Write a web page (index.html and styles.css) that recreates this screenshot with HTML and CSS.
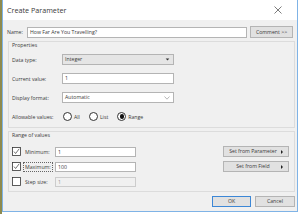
FILE: index.html
```html
<!DOCTYPE html>
<html>
<head>
<meta charset="utf-8">
<link rel="stylesheet" href="styles.css">
</head>
<body>
<div class="desk">
  <div class="strip"></div>
  <div class="window">
    <div class="titlebar">
      <span class="title">Create Parameter</span>
      <svg class="close" width="8" height="8" viewBox="0 0 8 8"><path d="M0.5 0.5L7.5 7.5M7.5 0.5L0.5 7.5" stroke="#444" stroke-width="0.7" fill="none"/></svg>
    </div>
    <div class="main">
      <div class="namerow">
        <span class="namelabel">Name:</span>
        <div class="field namefield">How Far Are You Travelling?</div>
        <div class="btn comment">Comment &gt;&gt;</div>
      </div>

      <div class="group props">
        <div class="gtitle">Properties</div>
        <div class="prow">
          <span class="plabel">Data type:</span>
          <div class="field select grey">Integer
            <svg class="arrow" width="5" height="3" viewBox="0 0 5 3"><path d="M0.7 0.4L4.3 0.4L2.5 2.6Z" fill="#333"/></svg>
          </div>
        </div>
        <div class="prow">
          <span class="plabel">Current value:</span>
          <div class="field ctrl">1</div>
        </div>
        <div class="prow">
          <span class="plabel">Display format:</span>
          <div class="field select">Automatic
            <svg class="chev" width="6" height="4" viewBox="0 0 6 4"><path d="M0.5 0.5L3 3.2L5.5 0.5" stroke="#999" stroke-width="0.7" fill="none"/></svg>
          </div>
        </div>
        <div class="prow">
          <span class="plabel">Allowable values:</span>
          <div class="radios">
            <span class="radio"></span><span class="rtext">All</span>
            <span class="radio"></span><span class="rtext">List</span>
            <span class="radio on"></span><span class="rtext">Range</span>
          </div>
        </div>
      </div>

      <div class="group range">
        <div class="gtitle">Range of values</div>
        <div class="rrow">
          <div class="chk">
            <svg class="box" width="9" height="9" viewBox="0 0 9 9"><rect x="0.5" y="0.5" width="8" height="8" fill="#fff" stroke="#333" stroke-width="0.8"/><path d="M2 4.6L3.6 6.5L7.2 1.8" stroke="#333" stroke-width="0.7" fill="none"/></svg>
            <span class="clabel">Minimum:</span>
          </div>
          <div class="field rinput">1</div>
          <div class="btn setbtn">Set from Parameter<span class="tri"></span></div>
        </div>
        <div class="rrow">
          <div class="chk">
            <svg class="box" width="9" height="9" viewBox="0 0 9 9"><rect x="0.5" y="0.5" width="8" height="8" fill="#fff" stroke="#333" stroke-width="0.8"/><path d="M2 4.6L3.6 6.5L7.2 1.8" stroke="#333" stroke-width="0.7" fill="none"/></svg>
            <span class="clabel focus">Maximum:</span>
          </div>
          <div class="field rinput">100</div>
          <div class="btn setbtn">Set from Field<span class="tri"></span></div>
        </div>
        <div class="rrow">
          <div class="chk">
            <svg class="box" width="9" height="9" viewBox="0 0 9 9"><rect x="0.5" y="0.5" width="8" height="8" fill="#fff" stroke="#333" stroke-width="0.8"/></svg>
            <span class="clabel">Step size:</span>
          </div>
          <div class="field rinput disabled">1</div>
        </div>
      </div>

      <div class="footer">
        <div class="btn okbtn">OK</div>
        <div class="btn cancelbtn">Cancel</div>
      </div>
    </div>
  </div>
</div>
</body>
</html>
```
FILE: styles.css
```css
html, body {
  margin: 0;
  padding: 0;
  background: #ffffff;
}
body {
  font-family: "Open Sans", "Noto Sans", sans-serif;
  font-size: 5.2px;
  color: #3a3a3a;
}
.desk {
  display: flex;
  width: 300px;
  height: 214px;
}
.strip {
  width: 2px;
  height: 214px;
  background: #8d8a4e;
}
.window {
  box-sizing: border-box;
  width: 296px;
  height: 212px;
  border: 1px solid #7fb3e6;
  border-top: 0;
  background: #f0f0f0;
  display: flex;
  flex-direction: column;
}
.titlebar {
  height: 20px;
  background: #ffffff;
  display: flex;
  align-items: center;
  justify-content: space-between;
  padding: 0 15px 0 4px;
}
.title {
  font-size: 7.2px;
  color: #3a3a3a;
}
.main {
  padding: 6px 2px 0 4px;
  display: flex;
  flex-direction: column;
}
.namerow {
  display: flex;
  align-items: center;
  height: 12px;
}
.namelabel {
  width: 20px;
}
.field {
  box-sizing: border-box;
  background: #ffffff;
  border: 1px solid #b4b4b4;
  height: 11px;
  line-height: 9px;
  padding-left: 2px;
  white-space: nowrap;
}
.namefield {
  width: 220px;
}
.btn {
  box-sizing: border-box;
  background: #e1e1e1;
  border: 1px solid #b4b4b4;
  text-align: center;
  white-space: nowrap;
}
.comment {
  width: 43px;
  height: 12px;
  line-height: 10px;
  margin-left: 3px;
}
.group {
  border: 1px solid #dcdcdc;
  margin-left: 1px;
  display: flex;
  flex-direction: column;
}
.props {
  margin-top: 3px;
  padding-bottom: 5px;
  gap: 8px;
}
.gtitle {
  height: 7px;
  line-height: 7px;
  padding-left: 3px;
  margin-bottom: -3px;
}
.prow {
  display: flex;
  align-items: center;
  height: 11px;
  padding-left: 3px;
}
.plabel {
  width: 50px;
}
.ctrl, .select {
  width: 112px;
}
.select {
  display: flex;
  align-items: center;
  justify-content: space-between;
  padding-right: 3px;
}
.grey {
  background: #e5e5e5;
}
.radios {
  display: flex;
  align-items: center;
  margin-left: 1px;
}
.radio {
  box-sizing: border-box;
  width: 9px;
  height: 9px;
  border: 0.8px solid #333;
  border-radius: 50%;
  background: #fff;
  display: flex;
  align-items: center;
  justify-content: center;
}
.radio.on::after {
  content: "";
  width: 4.5px;
  height: 4.5px;
  border-radius: 50%;
  background: #111;
}
.rtext {
  margin-left: 2px;
  margin-right: 9px;
}
.range {
  margin-top: 3px;
  padding-bottom: 4px;
}
.range .gtitle {
  margin-bottom: 7px;
}
.rrow {
  display: flex;
  align-items: center;
  height: 11px;
  margin-bottom: 4px;
  padding-left: 3px;
  padding-right: 5px;
}
.rrow:last-child {
  margin-bottom: 0;
}
.chk {
  display: flex;
  align-items: center;
  width: 43px;
}
.box {
  display: block;
}
.clabel {
  margin-left: 2px;
  padding: 0 1px;
  border: 1px dotted transparent;
  line-height: 8px;
}
.clabel.focus {
  border-color: #666;
}
.rinput {
  width: 81px;
  height: 10px;
  line-height: 8px;
}
.disabled {
  background: #f0f0f0;
  border-color: #cccccc;
  color: #999;
}
.setbtn {
  margin-left: auto;
  width: 66px;
  height: 11px;
  line-height: 9px;
  padding-right: 6px;
  position: relative;
}
.tri {
  position: absolute;
  right: 5px;
  top: 3px;
  width: 0;
  height: 0;
  border-top: 2px solid transparent;
  border-bottom: 2px solid transparent;
  border-left: 2.5px solid #222;
}
.footer {
  display: flex;
  justify-content: flex-end;
  gap: 4px;
  margin-top: 4px;
}
.okbtn, .cancelbtn {
  height: 11px;
  line-height: 9px;
}
.okbtn {
  width: 39px;
  border-color: #3c87d6;
}
.cancelbtn {
  width: 40px;
}
```
